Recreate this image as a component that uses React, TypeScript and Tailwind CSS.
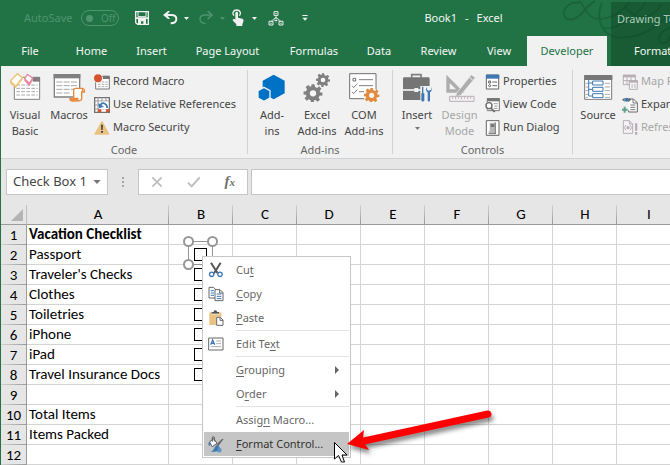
import type { ReactNode } from "react";
import clsx from "clsx";

interface IconProps {
  w: number;
  h: number;
  children: ReactNode;
}

// Icons are drawn on a grid three times finer than their displayed size.
function Icon({ w, h, children }: IconProps) {
  return (
    <svg
      width={w}
      height={h}
      viewBox={`0 0 ${w * 3} ${h * 3}`}
      fill="none"
      className="shrink-0"
      aria-hidden="true"
    >
      {children}
    </svg>
  );
}

const TABS = [
  { label: "File", width: "w-[58px]" },
  { label: "Home", width: "w-[65px]" },
  { label: "Insert", width: "w-[55px]" },
  { label: "Page Layout", width: "w-[97px]" },
  { label: "Formulas", width: "w-[76px]" },
  { label: "Data", width: "w-[54px]" },
  { label: "Review", width: "w-[65px]" },
  { label: "View", width: "w-[56px]" },
  { label: "Developer", width: "w-20", active: true },
];

const COLUMNS = ["A", "B", "C", "D", "E", "F", "G", "H", "I"];

const ROWS = [
  { text: "Vacation Checklist", bold: true },
  { text: "Passport", check: true },
  { text: "Traveler's Checks", check: true },
  { text: "Clothes", check: true },
  { text: "Toiletries", check: true },
  { text: "iPhone", check: true },
  { text: "iPad", check: true },
  { text: "Travel Insurance Docs", check: true },
  { text: "" },
  { text: "Total Items" },
  { text: "Items Packed" },
  { text: "" },
];

function Caret({ dim = false }: { dim?: boolean }) {
  return (
    <Icon w={5} h={3}>
      <path d="M0 0H15L7.5 9Z" fill={dim ? "#4f9470" : "#f0f0f0"} />
    </Icon>
  );
}

function QuickAccess() {
  return (
    <div className="flex items-center pl-[23px]">
      <label htmlFor="autosave" className="w-[57px] text-[11px] text-[#4f9470]">
        AutoSave
      </label>
      <button
        id="autosave"
        role="switch"
        aria-checked="false"
        className="flex h-4 w-[38px] items-center gap-2 rounded-full border border-[#4f9470] pl-1 text-[10px] text-[#4f9470]"
      >
        <span className="size-[7px] rounded-full bg-[#4f9470]" />
        Off
      </button>
      <button aria-label="Save" className="ml-4">
        <Icon w={14} h={14}>
          <path d="M2 2H40V40H8L2 35Z" stroke="#f0f0f0" strokeWidth="4" />
          <path d="M9 2V17H33V2" stroke="#f0f0f0" strokeWidth="3" />
          <path d="M2 19H40V24H2ZM9 24H33V40H25V31H18V40H9Z" fill="#f0f0f0" />
        </Icon>
      </button>
      <button aria-label="Undo" className="ml-[14px]">
        <Icon w={15} h={14}>
          <path
            d="M5 12H25C35 12 40 17 40 24C40 32 34 37 23 37"
            stroke="#f0f0f0"
            strokeWidth="6"
          />
          <path d="M0 12L15 0H21L12 12L21 24H15Z" fill="#f0f0f0" />
        </Icon>
      </button>
      <button aria-label="Undo history" className="ml-[6px]">
        <Caret />
      </button>
      <button aria-label="Redo" className="ml-[10px]">
        <Icon w={15} h={14}>
          <path
            d="M38 12H18C8 12 3 17 3 24C3 32 9 37 20 37"
            stroke="#4f9470"
            strokeWidth="4"
          />
          <path d="M26 0L39 12L26 24" stroke="#4f9470" strokeWidth="5" />
        </Icon>
      </button>
      <button aria-label="Redo history" className="ml-[6px]">
        <Caret dim />
      </button>
      <button aria-label="Touch/Mouse mode" className="ml-[7px]">
        <Icon w={12} h={18}>
          <path
            d="M6 20C0 13 3 3 14 3C25 3 28 13 22 20"
            stroke="#f0f0f0"
            strokeWidth="4"
          />
          <path
            d="M10 12C10 7 18 7 18 12V26L31 29C35 30 35 34 34 38L31 46V51H13V46L3 35C0 31 5 28 9 31L10 33Z"
            fill="#f0f0f0"
          />
        </Icon>
      </button>
      <button aria-label="Touch options" className="ml-2">
        <Caret />
      </button>
      <button aria-label="Organization" className="ml-[11px]">
        <Icon w={16} h={15}>
          <path
            d="M24 13V20M24 18L10 32M24 18L38 32M19 28H31M24 22V34"
            stroke="#e4ece7"
            strokeWidth="4"
            strokeDasharray="3 2"
          />
          <path
            d="M18 2H30V13H18ZM3 31H15V42H3ZM33 31H45V42H33Z"
            stroke="#f0f0f0"
            strokeWidth="3"
          />
          <path d="M22 6H26V9H22ZM7 35H11V38H7ZM37 35H41V38H37Z" fill="#f0f0f0" />
        </Icon>
      </button>
      <button aria-label="Customize toolbar" className="ml-[18px]">
        <Icon w={6} h={6}>
          <path d="M1 1.5H17" stroke="#f0f0f0" strokeWidth="3" />
          <path d="M1 8H17L9 17Z" fill="#f0f0f0" />
        </Icon>
      </button>
    </div>
  );
}

function Header() {
  return (
    <header className="relative flex h-[66px] bg-[#217346] text-[#f3f7f4]">
      <svg
        className="absolute top-0 right-0"
        width="112"
        height="48"
        fill="none"
        stroke="#1b633b"
        strokeWidth="1.5"
        aria-hidden="true"
      >
        <path
          d="M22 3C12 1 5 8 6 14C7 21 15 21 21 16C27 10 31 4 37 1"
          strokeWidth="2"
        />
        <path d="M21 1C26 4 27 14 36 18C48 22 62 14 72 2" />
        <path d="M44 3C38 16 42 34 58 37C76 40 98 30 110 14" strokeWidth="2" />
        <path d="M45 28C56 30 76 20 88 2M66 6C78 20 92 22 104 4" />
        <path d="M112 28C104 30 99 36 102 42C105 46 111 42 112 36" strokeWidth="2" />
      </svg>
      <div className="relative flex min-w-0 flex-1 flex-col">
        <div className="flex h-9 shrink-0">
          <QuickAccess />
          <h1 className="flex flex-1 items-center justify-center gap-2 pl-2 text-[11px]">
            <span>Book1</span>
            <span>-</span>
            <span>Excel</span>
          </h1>
        </div>
        <nav className="flex flex-1" role="tablist">
          {TABS.map((tab) => (
            <button
              key={tab.label}
              role="tab"
              aria-selected={!!tab.active}
              className={clsx(
                "shrink-0 text-center text-[11px] whitespace-nowrap",
                tab.width,
                tab.active && "bg-[#f1f1f1] text-[#217346]",
              )}
            >
              {tab.label}
            </button>
          ))}
        </nav>
      </div>
      <div className="relative mt-[2px] flex w-[59px] flex-col overflow-hidden bg-[#0f3f22]/45">
        <div className="flex h-[34px] items-center pl-[6px] text-[11px] whitespace-nowrap text-[#a9cbb7]">
          Drawing Tools
        </div>
        <button role="tab" aria-selected="false" className="flex-1 pl-[23px] text-left text-[11px]">
          Format
        </button>
      </div>
    </header>
  );
}

interface GroupProps {
  label?: string;
  className: string;
  children: ReactNode;
}

function Group({ label, className, children }: GroupProps) {
  return (
    <section className={clsx("flex shrink-0 flex-col", className)}>
      <div className="flex h-[76px] items-start pt-1">{children}</div>
      <div className="h-4 text-center text-[11px] leading-4 text-[#666]">{label}</div>
    </section>
  );
}

function Divider() {
  return <div className="my-1 w-px shrink-0 bg-[#d2d2d2]" />;
}

interface BigButtonProps {
  lines: string[];
  width: string;
  icon: ReactNode;
  disabled?: boolean;
  caret?: boolean;
}

function BigButton({ lines, width, icon, disabled, caret }: BigButtonProps) {
  return (
    <button
      disabled={disabled}
      className={clsx(
        "flex shrink-0 flex-col items-center pt-[2px] text-[11px] leading-4 whitespace-nowrap",
        width,
        disabled ? "text-[#a6a6a6]" : "text-[#444]",
      )}
    >
      <span className="mb-[5px]">{icon}</span>
      {lines.map((line) => (
        <span key={line}>{line}</span>
      ))}
      {caret && (
        <span className="pt-1">
          <Icon w={5} h={3}>
            <path d="M0 0H15L7.5 9Z" fill="#777" />
          </Icon>
        </span>
      )}
    </button>
  );
}

interface SmallButtonProps {
  label: string;
  icon: ReactNode;
  disabled?: boolean;
}

function SmallButton({ label, icon, disabled }: SmallButtonProps) {
  return (
    <button
      disabled={disabled}
      className={clsx(
        "flex h-[23px] items-center gap-[3px] text-[11px] whitespace-nowrap",
        disabled ? "text-[#a6a6a6]" : "text-[#444]",
      )}
    >
      {icon}
      {label}
    </button>
  );
}

const GEAR =
  "M-4 -26H4L6 -18L12 -15L18 -20L24 -13L19 -7L20 -3L27 -2V6L19 7L16 12L20 18L13 24L7 19L3 20L2 27H-6L-7 20L-12 17L-18 21L-24 14L-19 8L-20 4L-27 3V-5L-20 -6L-17 -12L-21 -18L-14 -24L-8 -19L-5 -20Z";

function Gear({ x, y, scale, fill }: { x: number; y: number; scale: number; fill: string }) {
  return (
    <g transform={`translate(${x} ${y}) scale(${scale})`}>
      <path d={GEAR} fill={fill} />
      <circle r="9" fill="#f6f6f6" />
    </g>
  );
}

const visualBasicIcon = (
  <Icon w={32} h={30}>
    <path d="M16 16H92V82H16Z" fill="#fff" stroke="#808080" strokeWidth="3" />
    <path d="M72 15H93V29H72Z" fill="#808080" />
    <path
      d="M22 39H86M22 49H86M22 59H86M22 69H86"
      stroke="#a8a8a8"
      strokeWidth="3"
      strokeDasharray="11 4"
    />
    <path d="M4 27L25 5L40 17L20 43Z" fill="#fff" stroke="#efc477" strokeWidth="4" />
    <path d="M3 27L20 41L40 17V23L20 48L3 33Z" fill="#efc477" />
    <path d="M47 20L55 7L71 18L61 34Z" fill="#fff" stroke="#ea8aa1" strokeWidth="4" />
    <path d="M46 20L61 32L72 18V25L61 42L46 27Z" fill="#ea8aa1" />
  </Icon>
);

const macrosIcon = (
  <Icon w={32} h={30}>
    <path d="M4 8H80V75H4Z" fill="#fff" stroke="#808080" strokeWidth="4" />
    <path d="M2 6H82V19H2Z" fill="#808080" />
    <path
      d="M10 30H74M10 41H74M10 52H74M10 63H54"
      stroke="#a8a8a8"
      strokeWidth="3"
      strokeDasharray="18 4"
    />
    <path d="M62 51H91V57H85V82H56V77H62Z" fill="#fff" />
    <path
      d="M88 62V56C88 48 94 49 94 56V60H86V80C86 87 80 87 58 87C50 87 49 80 52 79H76M62 79V54C62 49 65 49 69 49H90"
      stroke="#e8883c"
      strokeWidth="4"
    />
    <path d="M52 79H76V86H54Z" fill="#e8883c" />
  </Icon>
);

const recordIcon = (
  <Icon w={16} h={16}>
    <path d="M5 8H46V45H5Z" fill="#fff" stroke="#777" strokeWidth="3" />
    <path d="M26 5H47V15H26Z" fill="#777" />
    <path d="M12 24H41M12 31H41M12 38H41" stroke="#aaa" strokeWidth="3" strokeDasharray="8 3" />
    <circle cx="12" cy="13" r="14" fill="#f6f6f6" />
    <circle cx="12" cy="13" r="12" fill="#d5532f" />
  </Icon>
);

const relativeIcon = (
  <Icon w={16} h={16}>
    <path d="M2 2H46V46H2Z" fill="#fff" stroke="#707070" strokeWidth="4" />
    <path d="M12 2V46M24 2V16M36 2V12M2 12H46M2 24H16M2 36H46" stroke="#999" strokeWidth="3" />
    <path d="M15 14H43V37H15Z" fill="#fff" />
    <path d="M18 25C26 14 38 18 40 33" stroke="#3e78b3" strokeWidth="5" />
    <path d="M13 18L15 34L30 29Z" fill="#3e78b3" />
    <path d="M12 37H22V46H12ZM36 37H46V46H36Z" fill="#d5532f" />
  </Icon>
);

const securityIcon = (
  <Icon w={16} h={16}>
    <path d="M24 5L44 42H3Z" fill="#eac282" stroke="#eac282" strokeWidth="4" strokeLinejoin="round" />
    <path d="M21 14H27L26 30H22ZM21 33H27V38H21Z" fill="#444" />
  </Icon>
);

const addinsIcon = (
  <Icon w={32} h={30}>
    <path d="M53 8L86 26V64L53 82L20 64V26Z" fill="#0072c6" />
    <path
      d="M24 46L42 56V78L24 88L6 78V56Z"
      fill="#0072c6"
      stroke="#f1f1f1"
      strokeWidth="4"
    />
  </Icon>
);

const excelAddinsIcon = (
  <Icon w={32} h={30}>
    <Gear x={36} y={64} scale={1.05} fill="#808080" />
    <Gear x={66} y={24} scale={0.78} fill="#808080" />
  </Icon>
);

const comAddinsIcon = (
  <Icon w={32} h={30}>
    <path d="M5 5H84V80H5Z" fill="#fff" stroke="#707070" strokeWidth="3" />
    <path d="M15 19H23V27H15Z" stroke="#707070" strokeWidth="3" />
    <path
      d="M12 41L17 47L28 35M12 59L17 65L28 53M33 23H75M33 41H75M33 59H48"
      stroke="#808080"
      strokeWidth="3"
    />
    <circle cx="71" cy="73" r="24" fill="#f6f6f6" />
    <Gear x={71} y={70} scale={0.86} fill="#e38a3f" />
  </Icon>
);

const insertIcon = (
  <Icon w={32} h={30}>
    <path d="M32 17V8H60V17" stroke="#808080" strokeWidth="5" />
    <path d="M6 20C6 17 8 16 11 16H81C85 16 86 18 86 21V52H6Z" fill="#757575" />
    <path d="M6 56H62V84H6Z" fill="#757575" />
    <path d="M6 54H86" stroke="#f1f1f1" strokeWidth="3" />
    <path d="M40 48H52V60H40Z" fill="#f1f1f1" />
    <path d="M58 42H94V90H58Z" fill="#f1f1f1" />
    <path d="M65 44V66" stroke="#3e78b3" strokeWidth="4" />
    <path d="M61 64H70V86L65 89L61 86Z" fill="#3e78b3" />
    <path
      d="M76 45C74 54 76 59 80 61V85C80 90 87 90 87 85V61C93 58 94 51 91 45V54H87L83 57L79 54Z"
      fill="#3e78b3"
    />
  </Icon>
);

const designIcon = (
  <Icon w={32} h={30}>
    <path d="M7 8V62H61ZM17 33L36 52H17Z" fill="#adadad" fillRule="evenodd" />
    <path d="M38 63L82 8L94 17L50 70L35 74Z" fill="#adadad" stroke="#f1f1f1" strokeWidth="2" />
    <path d="M76 16L86 24" stroke="#f1f1f1" strokeWidth="3" />
    <path d="M17 73H90V88H17Z" fill="#f4f0f4" stroke="#b7b0b7" strokeWidth="3" />
    <path d="M26 74V80M35 74V82M44 74V80M53 74V82M62 74V80M71 74V82M80 74V80" stroke="#b7b0b7" strokeWidth="3" />
  </Icon>
);

const propertiesIcon = (
  <Icon w={15} h={16}>
    <path d="M4 3H41V45H4Z" fill="#fff" stroke="#666" strokeWidth="3" />
    <path d="M3 2H43V14H3Z" fill="#3e78b3" />
    <path d="M11 21H17V27H11ZM22 24H36M22 35H36" stroke="#666" strokeWidth="3" />
    <circle cx="14" cy="35" r="3" stroke="#666" strokeWidth="3" />
  </Icon>
);

const viewCodeIcon = (
  <Icon w={15} h={16}>
    <path d="M7 5H43V41H7Z" fill="#fff" stroke="#777" strokeWidth="3" />
    <path d="M6 3H44V13H6Z" fill="#777" />
    <path d="M26 20H38M28 27H38M26 34H38" stroke="#999" strokeWidth="3" />
    <circle cx="12" cy="26" r="12" fill="#f1f1f1" />
    <circle cx="12" cy="26" r="9" fill="#fff" stroke="#666" strokeWidth="4" />
    <path d="M18 33L29 45" stroke="#666" strokeWidth="5" />
  </Icon>
);

const runDialogIcon = (
  <Icon w={15} h={16}>
    <path d="M4 2H42V46H4Z" fill="#fff" stroke="#666" strokeWidth="3" />
    <path d="M14 8H31V41H11V34H14Z" fill="#b8b8b8" />
    <path d="M17 12H28V21H17Z" fill="#777" />
    <path d="M31 7V42M11 41H33" stroke="#777" strokeWidth="3" />
  </Icon>
);

const sourceIcon = (
  <Icon w={32} h={30}>
    <path d="M8 11H89V82H8Z" fill="#fff" stroke="#777" strokeWidth="3" />
    <path d="M7 9H91V24H7Z" fill="#777" />
    <path d="M11 34H84M11 45H84M11 56H84M11 67H84M11 76H84" stroke="#aaa" strokeWidth="3" />
    <path d="M18 24H68V80H18Z" fill="#fff" />
    <path d="M20 24V72H32M20 33H32M20 52H32" stroke="#3e78b3" strokeWidth="3" />
    <path d="M32 27H63V39H32ZM32 46H63V58H32ZM32 65H63V77H32Z" stroke="#3e78b3" strokeWidth="3" />
  </Icon>
);

const mapIcon = (
  <Icon w={16} h={16}>
    <path d="M4 4H40V32H4Z" fill="#f6f2f6" stroke="#b5afb5" strokeWidth="3" />
    <path d="M3 2H41V10H3Z" fill="#b5afb5" />
    <path d="M15 10V32M27 10V32M4 20H40" stroke="#b5afb5" strokeWidth="3" />
    <path d="M22 20H46V46H22Z" fill="#f6f2f6" stroke="#b5afb5" strokeWidth="3" />
    <path d="M21 18H47V26H21Z" fill="#b5afb5" />
    <path d="M28 33H33M36 33H42M28 39H33M36 39H42" stroke="#b5afb5" strokeWidth="3" />
  </Icon>
);

const expansionIcon = (
  <Icon w={16} h={16}>
    <path d="M20 14V6H34L46 17V45H20V40" fill="#fff" stroke="#666" strokeWidth="3" />
    <path d="M33 6V18H46M25 24H40M25 31H40M25 38H40" stroke="#777" strokeWidth="3" />
    <path d="M0 8L8 2V14ZM28 8L20 2V14Z" fill="#666" />
    <circle cx="14" cy="8" r="6" fill="#3e78b3" />
    <path d="M8 29V47M-1 38H17" stroke="#5fa389" strokeWidth="6" />
  </Icon>
);

const refreshIcon = (
  <Icon w={16} h={16}>
    <path d="M4 2H22L32 12V40H4Z" fill="#f6f2f6" stroke="#b5afb5" strokeWidth="3" />
    <path d="M22 2V12H32" stroke="#b5afb5" strokeWidth="3" />
    <circle cx="18" cy="23" r="5" fill="#b5afb5" />
    <path d="M12 15L7 23L12 31M24 15L29 23L24 31" stroke="#b5afb5" strokeWidth="3" />
    <path d="M39 10H46V32H39ZM39 36H46V44H39Z" fill="#b5afb5" />
  </Icon>
);

function Ribbon() {
  return (
    <div className="flex h-[93px] overflow-hidden border-b border-[#d2d2d2] bg-[#f1f1f1]">
      <Group label="Code" className="w-[246px]">
        <BigButton lines={["Visual", "Basic"]} width="ml-[3px] w-[42px]" icon={visualBasicIcon} />
        <BigButton lines={["Macros"]} width="w-[46px]" icon={macrosIcon} />
        <div className="ml-[2px] flex flex-col">
          <SmallButton label="Record Macro" icon={recordIcon} />
          <SmallButton label="Use Relative References" icon={relativeIcon} />
          <SmallButton label="Macro Security" icon={securityIcon} />
        </div>
      </Group>
      <Divider />
      <Group label="Add-ins" className="w-36">
        <BigButton lines={["Add-", "ins"]} width="ml-[2px] w-11" icon={addinsIcon} />
        <BigButton lines={["Excel", "Add-ins"]} width="w-[46px]" icon={excelAddinsIcon} />
        <BigButton lines={["COM", "Add-ins"]} width="w-12" icon={comAddinsIcon} />
      </Group>
      <Divider />
      <Group label="Controls" className="w-[179px]">
        <BigButton lines={["Insert"]} width="ml-1 w-10" icon={insertIcon} caret />
        <BigButton lines={["Design", "Mode"]} width="w-[45px]" icon={designIcon} disabled />
        <div className="ml-[3px] flex flex-col">
          <SmallButton label="Properties" icon={propertiesIcon} />
          <SmallButton label="View Code" icon={viewCodeIcon} />
          <SmallButton label="Run Dialog" icon={runDialogIcon} />
        </div>
      </Group>
      <Divider />
      <Group className="w-[200px]">
        <BigButton lines={["Source"]} width="ml-[3px] w-11" icon={sourceIcon} />
        <div className="ml-[2px] flex flex-col">
          <SmallButton label="Map Properties" icon={mapIcon} disabled />
          <SmallButton label="Expansion Packs" icon={expansionIcon} />
          <SmallButton label="Refresh Data" icon={refreshIcon} disabled />
        </div>
      </Group>
    </div>
  );
}

function FormulaBar() {
  return (
    <div className="flex h-[46px] bg-[#e6e6e6] pt-[10px] pl-[5px]">
      <div className="flex h-[26px] w-[102px] items-center border border-[#c6c6c6] bg-white px-[6px]">
        <input
          aria-label="Name box"
          defaultValue="Check Box 1"
          className="w-0 flex-1 bg-transparent text-[13px] text-[#444] outline-none"
        />
        <button aria-label="Name list">
          <Icon w={8} h={4}>
            <path d="M1 0H23L12 12Z" fill="#777" />
          </Icon>
        </button>
      </div>
      <div className="flex h-[26px] w-[30px] flex-col items-center justify-center gap-[2px]">
        <span className="size-[2px] bg-[#a6a6a6]" />
        <span className="size-[2px] bg-[#a6a6a6]" />
        <span className="size-[2px] bg-[#a6a6a6]" />
      </div>
      <div className="flex h-[26px] w-[110px] items-center justify-between border border-[#c6c6c6] bg-white px-3">
        <button aria-label="Cancel">
          <Icon w={12} h={12}>
            <path d="M4 4L32 32M32 4L4 32" stroke="#bdbdbd" strokeWidth="5" />
          </Icon>
        </button>
        <button aria-label="Enter">
          <Icon w={14} h={12}>
            <path d="M3 20L14 31L38 4" stroke="#bdbdbd" strokeWidth="6" />
          </Icon>
        </button>
        <button
          aria-label="Insert function"
          className="pb-[2px] font-['Liberation_Serif',serif] text-[15px] leading-4 font-bold text-[#707070] italic"
        >
          f<span className="text-[11px]">x</span>
        </button>
      </div>
      <input
        aria-label="Formula"
        className="ml-[3px] h-[26px] min-w-0 flex-1 border border-r-0 border-[#c6c6c6] bg-white px-2 text-xs outline-none"
      />
    </div>
  );
}

function SelectionHandles() {
  return (
    <svg
      className="pointer-events-none absolute top-[-10px] left-[13px]"
      width="36"
      height="36"
      fill="#fff"
      stroke="#969696"
      aria-hidden="true"
    >
      <path d="M6.5 6.5H30.5V29.5H6.5Z" fill="none" />
      <g strokeWidth="2">
        <circle cx="6.5" cy="6.5" r="4.5" />
        <circle cx="30.5" cy="6.5" r="4.5" />
        <circle cx="6.5" cy="29.5" r="4.5" />
      </g>
    </svg>
  );
}

function Grid() {
  return (
    <table className="w-[680px] table-fixed border-separate border-spacing-0 bg-white font-['Carlito','Lato',sans-serif] text-[15px] leading-[19px] text-black">
      <colgroup>
        <col className="w-[26px]" />
        <col className="w-[142px]" />
        {COLUMNS.slice(1).map((c) => (
          <col key={c} className="w-16" />
        ))}
      </colgroup>
      <thead>
        <tr className="h-5 bg-[#e6e6e6]">
          <th
            aria-label="Select all"
            className="border-r border-b border-r-[#c0c0c0] border-b-[#9b9b9b] p-0"
          >
            <svg width="12" height="12" className="ml-[10px]" aria-hidden="true">
              <path d="M12 0V12H0Z" fill="#b4b4b4" />
            </svg>
          </th>
          {COLUMNS.map((c) => (
            <th
              key={c}
              className="border-b border-[#9b9b9b] bg-[linear-gradient(#d2d2d2,#9b9b9b)] bg-[length:1px_100%] bg-right bg-no-repeat p-0 font-normal"
            >
              {c}
            </th>
          ))}
        </tr>
      </thead>
      <tbody>
        {ROWS.map((row, i) => (
          <tr key={i} className="h-5">
            <th className="border-r border-[#9b9b9b] bg-[#e6e6e6] bg-[linear-gradient(90deg,#d2d2d2,#9b9b9b)] bg-[length:100%_1px] bg-bottom bg-no-repeat p-0 font-normal">
              {i + 1}
            </th>
            <td
              className={clsx(
                "border-r border-b border-[#d4d4d4] p-0 pl-[2px] whitespace-nowrap",
                row.bold && "font-bold",
              )}
            >
              {row.text}
            </td>
            <td className="relative border-r border-b border-[#d4d4d4] p-0">
              {row.check && (
                <input
                  type="checkbox"
                  aria-label={row.text}
                  className="mb-px ml-[25px] block size-[13px] appearance-none border border-black bg-white"
                />
              )}
              {i === 1 && <SelectionHandles />}
            </td>
            {COLUMNS.slice(2).map((c) => (
              <td key={c} className="border-r border-b border-[#d4d4d4] p-0" />
            ))}
          </tr>
        ))}
      </tbody>
    </table>
  );
}

const cutIcon = (
  <Icon w={16} h={16}>
    <path d="M9 2L29 34M38 2L18 34" stroke="#555" strokeWidth="6" />
    <circle cx="11" cy="37" r="6.5" fill="#fff" stroke="#3e78b3" strokeWidth="4" />
    <circle cx="36" cy="37" r="6.5" fill="#fff" stroke="#3e78b3" strokeWidth="4" />
  </Icon>
);

const copyIcon = (
  <Icon w={16} h={16}>
    <path d="M3 4H16L23 10V36H3Z" fill="#fff" stroke="#666" strokeWidth="3" />
    <path d="M8 14H18M8 21H18M8 28H18" stroke="#3e78b3" strokeWidth="3" />
    <path d="M21 11H36L45 20V44H21Z" fill="#fff" stroke="#666" strokeWidth="3" />
    <path d="M35 11V21H45" stroke="#666" strokeWidth="3" />
    <path d="M26 24H40M26 31H40M26 38H40" stroke="#3e78b3" strokeWidth="3" />
  </Icon>
);

const pasteIcon = (
  <Icon w={16} h={16}>
    <path d="M4 7H40V45H4Z" fill="#eac282" />
    <path d="M11 12V6H17C17 -1 27 -1 27 6H33V12Z" fill="#555" />
    <path d="M10 12H35" stroke="#fff" strokeWidth="2" />
    <path d="M24 20H39L47 28V48H24Z" fill="#fff" />
    <path d="M26 22H37L45 30V46H26Z" fill="#fff" stroke="#666" strokeWidth="3" />
    <path d="M36 22V31H45" stroke="#666" strokeWidth="3" />
  </Icon>
);

const editTextIcon = (
  <Icon w={16} h={16}>
    <path d="M2 6H45V42H2Z" fill="#fff" stroke="#666" strokeWidth="3" />
    <path d="M8 26L14 12L20 26M10 22H18" stroke="#3e78b3" strokeWidth="4" />
    <path d="M25 15H39M25 23H39M8 32H39" stroke="#aaa" strokeWidth="3" />
  </Icon>
);

const formatIcon = (
  <Icon w={17} h={17}>
    <path d="M47 9L31 30L26 25L42 9Z" fill="#666" />
    <path d="M27 26L35 33C35 45 24 49 8 47C21 42 18 31 27 26Z" fill="#3e78b3" />
    <path d="M31 31L41 40L39 49H28" fill="#5f93c6" />
    <path d="M4 18L17 8L27 22L13 32Z" fill="#fff" stroke="#555" strokeWidth="3" />
    <path d="M13 17V5C13 1 19 1 19 5V16" stroke="#555" strokeWidth="3" />
    <path d="M3 18C0 23 2 31 5 29C9 27 5 22 9 20Z" fill="#3e78b3" />
  </Icon>
);

interface MenuItemProps {
  before?: string;
  hotkey: string;
  after: string;
  icon?: ReactNode;
  submenu?: boolean;
  active?: boolean;
}

function MenuItem({ before, hotkey, after, icon, submenu, active }: MenuItemProps) {
  return (
    <button
      role="menuitem"
      className={clsx(
        "flex h-6 w-full items-center pr-[10px] pl-1 text-left",
        active ? "bg-[#c5c5c5] text-[#333]" : "text-[#666]",
      )}
    >
      <span className="w-7 shrink-0">{icon}</span>
      <span className="flex-1 whitespace-nowrap">
        {before}
        <span className="underline underline-offset-2">{hotkey}</span>
        {after}
      </span>
      {submenu && (
        <Icon w={4} h={8}>
          <path d="M0 0L12 12L0 24Z" fill="#666" />
        </Icon>
      )}
    </button>
  );
}

function Separator() {
  return <div role="separator" className="mb-px ml-8 h-px bg-[#e1e3e6]" />;
}

function ContextMenu() {
  return (
    <div
      role="menu"
      className="absolute top-[51px] left-[201px] w-[149px] border border-[#c6c6c6] bg-white p-px text-[11px]"
    >
      <MenuItem before="Cu" hotkey="t" after="" icon={cutIcon} />
      <MenuItem hotkey="C" after="opy" icon={copyIcon} />
      <MenuItem hotkey="P" after="aste" icon={pasteIcon} />
      <Separator />
      <MenuItem before="Edit Te" hotkey="x" after="t" icon={editTextIcon} />
      <Separator />
      <MenuItem hotkey="G" after="rouping" submenu />
      <MenuItem before="O" hotkey="r" after="der" submenu />
      <Separator />
      <MenuItem before="Assig" hotkey="n" after=" Macro..." />
      <MenuItem hotkey="F" after="ormat Control..." icon={formatIcon} active />
    </div>
  );
}

function Pointer() {
  return (
    <svg
      className="pointer-events-none absolute top-[196px] left-[329px]"
      width="180"
      height="64"
      fill="none"
      aria-hidden="true"
    >
      <g className="drop-shadow-[2px_4px_2px_rgba(0,0,0,0.45)]">
        <path d="M34 40L158 13" stroke="#ff0000" strokeWidth="7" strokeLinecap="round" />
        <path d="M17 43L34 29L33 37L35 43L39 49Z" fill="#ff0000" />
      </g>
      <path
        d="M4.5 41.5V58L8.5 54.5L11.5 61H14.5L12 54H17Z"
        fill="#fff"
        stroke="#000"
      />
    </svg>
  );
}

export default function App() {
  return (
    <div className="overflow-hidden border-l border-[#217346] bg-white font-['Noto_Sans','Open_Sans',sans-serif]">
      <Header />
      <Ribbon />
      <FormulaBar />
      <main className="relative overflow-hidden">
        <Grid />
        <ContextMenu />
        <Pointer />
      </main>
    </div>
  );
}
